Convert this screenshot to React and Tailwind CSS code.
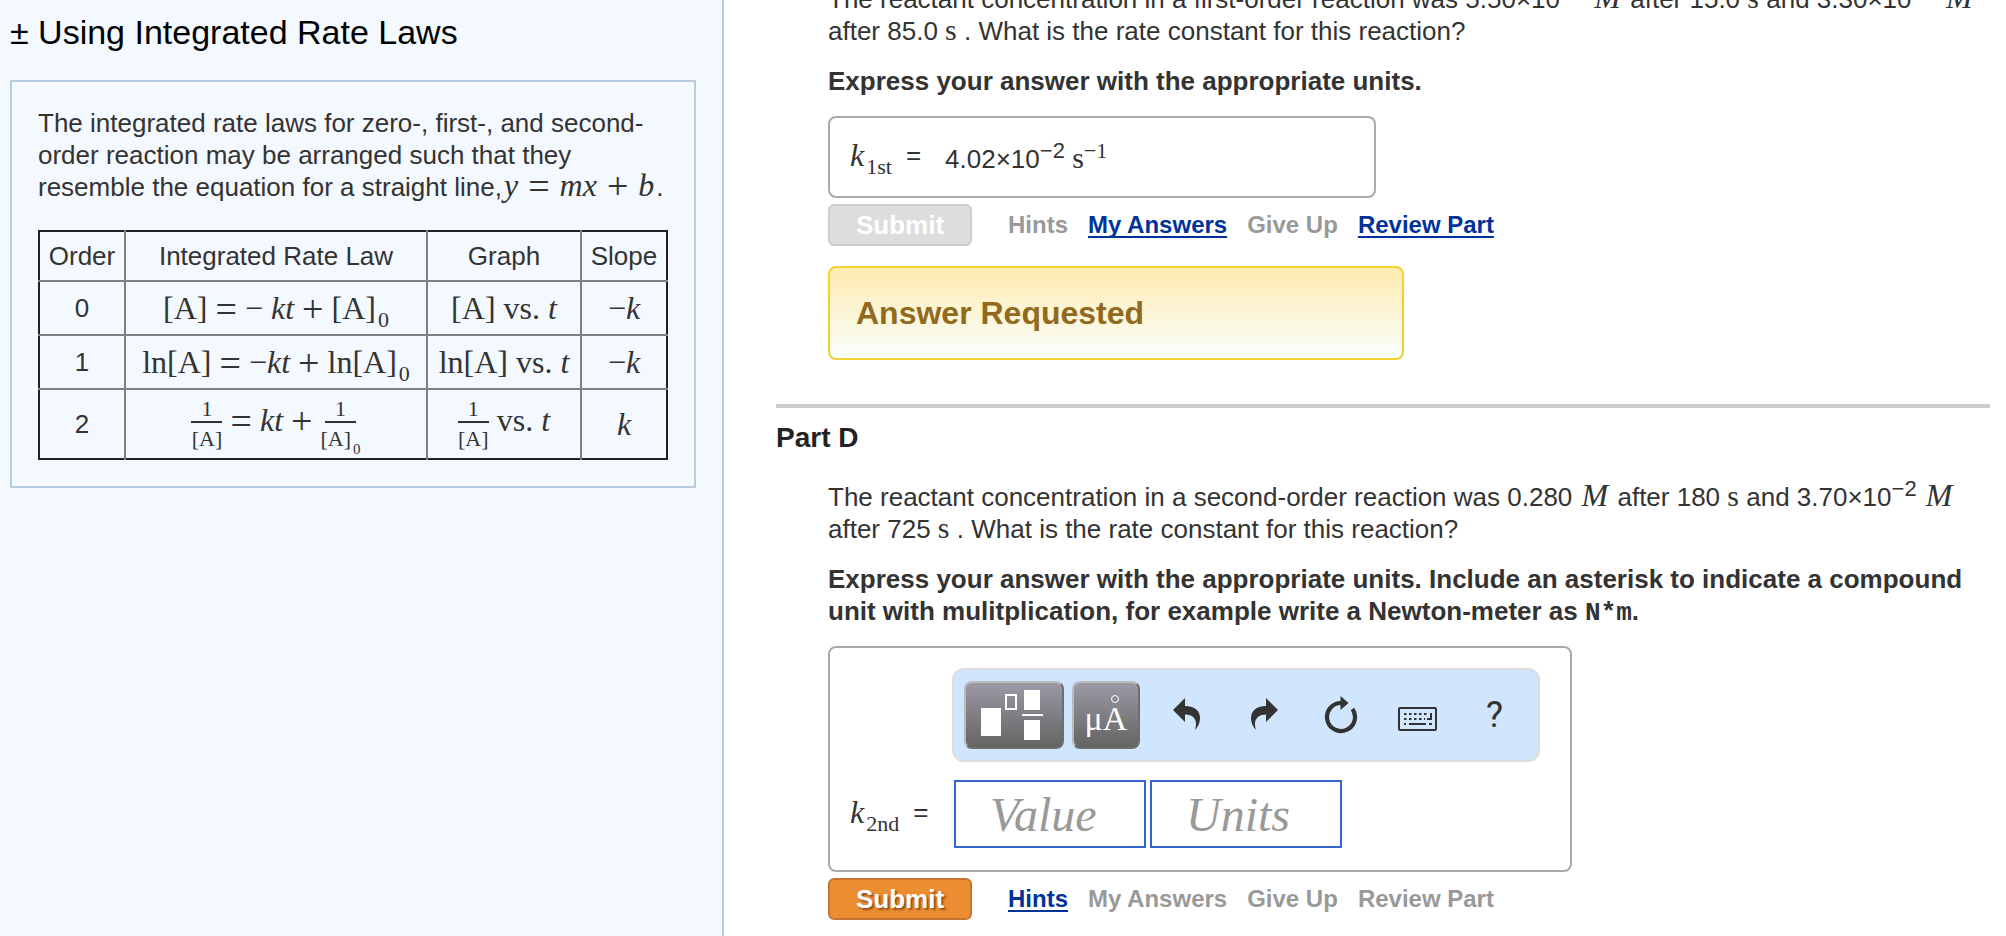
import React, { useState } from 'react';

const LINKS = ['Hints', 'My Answers', 'Give Up', 'Review Part'];

// Inline pieces of math
const Var = ({ children }) => (
  <i className="mx-[2px] font-['Liberation_Serif',serif] text-[32px] leading-6">{children}</i>
);
const Rm = ({ children }) => <span className="font-['Liberation_Serif',serif] text-[30px] leading-6">{children}</span>;
const Op = ({ children }) => (
  <span className="mx-2 align-[-3px] font-['Liberation_Serif',serif] text-[38px] leading-5">{children}</span>
);
const Sub = ({ children }) => <sub className="ml-[2px] bottom-[-8px] text-[22px]">{children}</sub>;
const Sup = ({ children }) => <sup className="top-[-10px] text-[22px]">{children}</sup>;

const Fraction = ({ sub }) => (
  <span className="inline-flex flex-col items-center align-middle text-[22px] leading-6">
    <span className="px-[10px] border-b-2 border-[#333]">1</span>
    <span className="pt-1">
      [A]{sub && <sub className="ml-[2px] bottom-[-8px] text-[15px]">{sub}</sub>}
    </span>
  </span>
);

const RATE_LAWS = [
  {
    order: 0,
    law: <>[A]<Op>=</Op>− <i>kt</i><Op>+</Op>[A]<Sub>0</Sub></>,
    graph: <>[A] vs. <i>t</i></>,
    slope: <>−<i>k</i></>,
  },
  {
    order: 1,
    law: <>ln[A]<Op>=</Op>−<i>kt</i><Op>+</Op>ln[A]<Sub>0</Sub></>,
    graph: <>ln[A] vs. <i>t</i></>,
    slope: <>−<i>k</i></>,
  },
  {
    order: 2,
    law: <><Fraction /><Op>=</Op><i>kt</i><Op>+</Op><Fraction sub="0" /></>,
    graph: <><Fraction /> vs. <i>t</i></>,
    slope: <i>k</i>,
  },
];

const UndoIcon = () => (
  <svg width="28" height="34" viewBox="0 0 28 34" fill="#333" aria-hidden="true">
    <path d="M0 12 12 0V8C22 8 27 13 27 20C27 25 25 29 22 32C24.500 25 23 16.500 12 16.500V24Z" />
  </svg>
);

const RedoIcon = () => (
  <svg width="28" height="34" viewBox="0 0 28 34" fill="#333" aria-hidden="true">
    <path d="M28 12 16 0V8C6 8 1 13 1 20C1 25 3 29 6 32C3.500 25 5 16.500 16 16.500V24Z" />
  </svg>
);

const ResetIcon = () => (
  <svg width="34" height="38" viewBox="0 0 34 38" fill="none" aria-hidden="true">
    <path d="M28.500 13A14 14 0 1 1 17 7" stroke="#333" strokeWidth="4.200" />
    <path d="M16.500 0 24.500 7 16.500 14Z" fill="#333" />
  </svg>
);

const KeyboardIcon = () => (
  <svg width="40" height="32" viewBox="0 -8 40 32" fill="none" stroke="#333" strokeWidth="2" aria-hidden="true">
    <rect x="1" y="1" width="37" height="22" rx="1" />
    <path d="M6 7H30" strokeDasharray="2.500 2.500" />
    <path d="M6 12H27" strokeDasharray="2.500 2.500" />
    <path d="M6 17H8M11 17H28M31 17H34M33 6V12H29" />
  </svg>
);

const TemplateIcon = () => (
  <svg width="62" height="52" viewBox="0 0 62 52" fill="#fff" aria-hidden="true">
    <rect x="0" y="19" width="20" height="28" />
    <rect x="25" y="6" width="10" height="14" fill="none" stroke="#fff" strokeWidth="2" />
    <rect x="43" y="1" width="16" height="20" />
    <rect x="41" y="25" width="21" height="2" />
    <rect x="43" y="31" width="16" height="20" />
  </svg>
);

const PartActions = ({ canSubmit, active }) => (
  <div className="mt-[6px] flex items-center">
    <button
      type="button"
      disabled={!canSubmit}
      className={`h-[42px] w-36 rounded-md border-2 text-[26px] leading-8 font-bold text-white ${
        canSubmit
          ? 'bg-[#ec8d31] border-[#c87434] [text-shadow:2px_2px_2px_rgba(90,40,0,0.6)]'
          : 'bg-[#ddd] border-[#ccc]'
      }`}
    >
      Submit
    </button>
    <nav className="ml-9 flex gap-5 text-[24px] leading-8 font-bold">
      {LINKS.map((label) =>
        active.includes(label) ? (
          <a key={label} href="#" className="text-[#039] underline decoration-2 underline-offset-[3px] [text-decoration-skip-ink:none]">{label}</a>
        ) : (
          <span key={label} className="text-[#999]">{label}</span>
        )
      )}
    </nav>
  </div>
);

const MathToolbar = () => {
  const padButton =
    'h-[68px] flex items-center justify-center rounded-lg border-2 border-t-[#bbb] border-l-[#bbb] border-r-[#6e6e6e] border-b-[#6e6e6e] bg-linear-to-b from-[#9c9aa5] to-[#646464]';
  const iconButton = 'w-[77px] flex items-center justify-center';

  return (
    <div className="w-[588px] h-[94px] pl-[10px] flex items-center rounded-xl border-2 border-[#ddd] bg-[#d0e5fe]">
      <button type="button" aria-label="Templates" className={`w-[100px] pr-1 ${padButton}`}>
        <TemplateIcon />
      </button>
      <button
        type="button"
        aria-label="Symbols"
        className={`ml-2 mr-2 w-[68px] pt-2 font-['Liberation_Serif',serif] text-[34px] text-white ${padButton}`}
      >
        μ
        <span className="relative">
          A
          <span className="absolute -top-2 left-1/2 -translate-x-1/2 size-2 rounded-full border border-white" />
        </span>
      </button>
      <button type="button" aria-label="Undo" className={iconButton}><UndoIcon /></button>
      <button type="button" aria-label="Redo" className={iconButton}><RedoIcon /></button>
      <button type="button" aria-label="Reset" className={iconButton}><ResetIcon /></button>
      <button type="button" aria-label="Keyboard" className={iconButton}><KeyboardIcon /></button>
      <button type="button" aria-label="Help" className={`font-[Roboto,sans-serif] text-[36px] text-[#333] ${iconButton}`}>?</button>
    </div>
  );
};

const App = () => {
  const [value, setValue] = useState('');
  const [units, setUnits] = useState('');

  const headCell = 'border-r-2 border-b-2 border-[#808080] last:border-r-0 font-normal';
  const cell =
    'border-r-2 border-b-2 border-[#808080] last:border-r-0 group-last:border-b-0 whitespace-nowrap';
  const field =
    "w-48 h-[68px] pl-[34px] border-2 border-[#36c] bg-white font-['Liberation_Serif',serif] text-[48px] placeholder:italic placeholder:text-[#999] placeholder:opacity-100 outline-none";

  return (
    <div className="h-screen overflow-hidden grid grid-cols-[724fr_1282fr] bg-white font-['Liberation_Sans',Arial,sans-serif] text-[26px] leading-8 text-[#333]">
      {/* Introduction */}
      <aside className="border-r-2 border-[#b8cbe0] bg-[#f4f8ff] pl-[10px] pr-[26px] pt-3">
        <h1 className="text-[34px] leading-10 text-black">± Using Integrated Rate Laws</h1>
        <div className="mt-7 px-[26px] pt-[25px] pb-[26px] border-2 border-[#b8cbe0]">
          <p>
            The integrated rate laws for zero-, first-, and second-order reaction may be arranged such that they
            resemble the equation for a straight line,<span className="whitespace-nowrap"><Var>y</Var><Op>=</Op><Var>mx</Var><Op>+</Op><Var>b</Var>.</span>
          </p>
          <table className="mt-[27px] w-full border-collapse border-2 border-[#222] text-center">
            <thead>
              <tr className="h-[50px]">
                <th className={`w-[86px] ${headCell}`}>Order</th>
                <th className={headCell}>Integrated Rate Law</th>
                <th className={`w-[154px] ${headCell}`}>Graph</th>
                <th className={`w-[86px] ${headCell}`}>Slope</th>
              </tr>
            </thead>
            <tbody className="font-['Liberation_Serif',serif] text-[32px]">
              {RATE_LAWS.map((row) => (
                <tr key={row.order} className="group h-[54px] last:h-[70px]">
                  <td className={`font-['Liberation_Sans',Arial,sans-serif] text-[26px] ${cell}`}>{row.order}</td>
                  <td className={cell}>{row.law}</td>
                  <td className={cell}>{row.graph}</td>
                  <td className={cell}>{row.slope}</td>
                </tr>
              ))}
            </tbody>
          </table>
        </div>
      </aside>

      <main className="-mt-[17px] pl-[52px] pr-4">
        {/* Part C */}
        <section className="pl-[52px]">
          <p>
            The reactant concentration in a first-order reaction was 5.50×10<Sup>−2</Sup> <Var>M</Var> after
            15.0 <Rm>s</Rm> and 3.30×10<Sup>−3</Sup> <Var>M</Var> after 85.0 <Rm>s</Rm> . What is the rate
            constant for this reaction?
          </p>
          <p className="mt-[18px] font-bold">Express your answer with the appropriate units.</p>
          <div className="mt-[19px] h-[82px] w-[548px] pl-5 flex items-center rounded-lg border-2 border-[#aaa]">
            <span className="pb-1 font-['Liberation_Serif',serif] text-[32px]"><i>k</i><Sub>1st</Sub></span>
            <span className="ml-[14px] pb-1">=</span>
            <span className="ml-6 pt-1">
              4.02×10<Sup>−2</Sup> <Rm>s<Sup>−1</Sup></Rm>
            </span>
          </div>
          <PartActions canSubmit={false} active={['My Answers', 'Review Part']} />
          <div className="mt-5 h-[94px] w-[576px] pl-[26px] flex items-center rounded-lg border-2 border-[#f2d230] bg-linear-to-b from-[#feebae] to-[#f9fffd] text-[32px] font-bold text-[#916a20]">
            Answer Requested
          </div>
        </section>

        {/* Part D */}
        <hr className="mt-11 border-t-4 border-[#ccc]" />
        <h2 className="mt-[14px] text-[28px] font-bold text-[#222]">Part D</h2>
        <section className="mt-[27px] pl-[52px]">
          <p>
            The reactant concentration in a second-order reaction was 0.280 <Var>M</Var> after 180 <Rm>s</Rm> and
            3.70×10<Sup>−2</Sup> <Var>M</Var> after 725 <Rm>s</Rm> . What is the rate constant for this reaction?
          </p>
          <p className="mt-[18px] font-bold">
            Express your answer with the appropriate units. Include an asterisk to indicate a compound unit with
            mulitplication, for example write a Newton-meter as{' '}
            <code className="font-['Liberation_Mono',monospace] text-[26px] leading-6">N*m</code>.
          </p>
          <div className="mt-[19px] w-[744px] pl-[20px] pt-5 pb-[22px] rounded-lg border-2 border-[#aaa]">
            <div className="pl-[102px]">
              <MathToolbar />
            </div>
            <div className="mt-[18px] flex items-center">
              <span className="w-[104px] flex items-center">
                <span className="pb-1 font-['Liberation_Serif',serif] text-[32px]"><i>k</i><Sub>2nd</Sub></span>
                <span className="ml-[14px] pb-1">=</span>
              </span>
              <input aria-label="Value" placeholder="Value" value={value} onChange={(e) => setValue(e.target.value)} className={field} />
              <input aria-label="Units" placeholder="Units" value={units} onChange={(e) => setUnits(e.target.value)} className={`ml-1 ${field}`} />
            </div>
          </div>
          <PartActions canSubmit active={['Hints']} />
        </section>
      </main>
    </div>
  );
};

export default App;
